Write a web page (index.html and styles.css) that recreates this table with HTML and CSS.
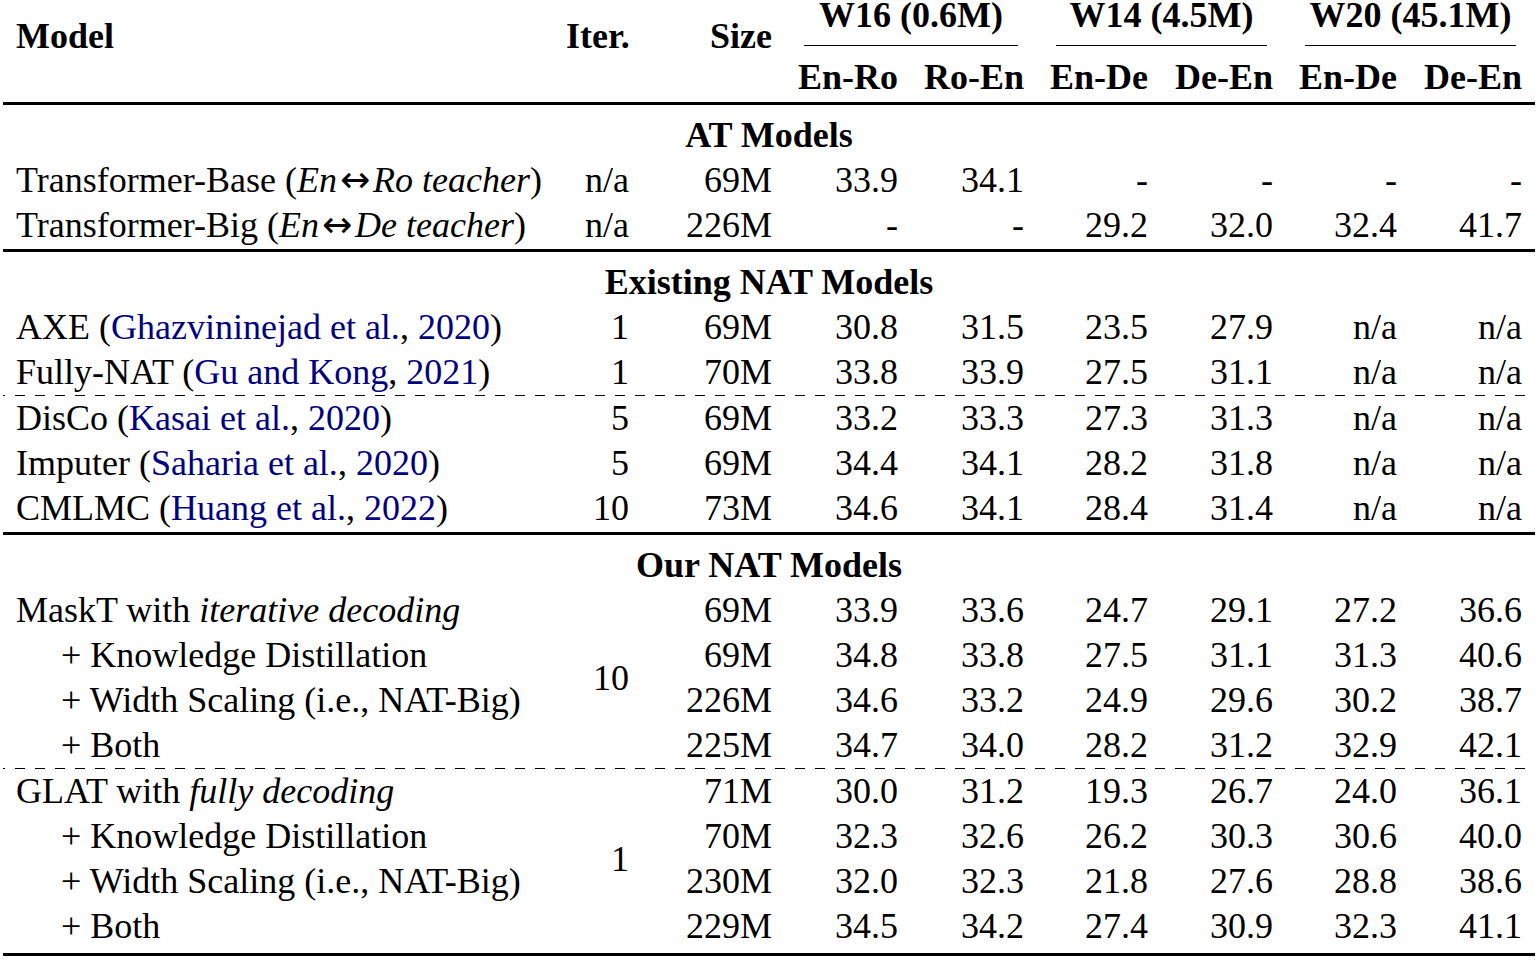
FILE: index.html
```html
<!DOCTYPE html>
<html lang="en">
<head>
<meta charset="utf-8">
<title>NAT results</title>
<link rel="stylesheet" href="styles.css">
</head>
<body>
<table class="results">
  <colgroup>
    <col class="c-model"><col class="c-iter"><col class="c-size">
    <col class="c-a"><col class="c-a"><col class="c-b"><col class="c-c"><col class="c-b"><col class="c-c">
  </colgroup>
  <thead>
    <tr>
      <th rowspan="2" class="rs left">Model</th>
      <th rowspan="2" class="rs">Iter.</th>
      <th rowspan="2" class="rs">Size</th>
      <th colspan="2" class="grp"><div class="cm">W16 (0.6M)</div></th>
      <th colspan="2" class="grp"><div class="cm">W14 (4.5M)</div></th>
      <th colspan="2" class="grp"><div class="cm">W20 (45.1M)</div></th>
    </tr>
    <tr class="pairs">
      <th>En-Ro</th><th>Ro-En</th><th>En-De</th><th>De-En</th><th>En-De</th><th>De-En</th>
    </tr>
  </thead>
  <tbody>
    <tr><td colspan="9" class="section">AT Models</td></tr>
    <tr>
      <td class="left">Transformer-Base (<i>En</i><span class="arr">↔</span><i>Ro teacher</i>)</td>
      <td>n/a</td><td>69M</td><td>33.9</td><td>34.1</td><td>-</td><td>-</td><td>-</td><td>-</td>
    </tr>
    <tr class="end">
      <td class="left">Transformer-Big (<i>En</i><span class="arr">↔</span><i>De teacher</i>)</td>
      <td>n/a</td><td>226M</td><td>-</td><td>-</td><td>29.2</td><td>32.0</td><td>32.4</td><td>41.7</td>
    </tr>

    <tr><td colspan="9" class="section">Existing NAT Models</td></tr>
    <tr>
      <td class="left">AXE (<span class="cite">Ghazvininejad et al.</span>, <span class="cite">2020</span>)</td>
      <td>1</td><td>69M</td><td>30.8</td><td>31.5</td><td>23.5</td><td>27.9</td><td>n/a</td><td>n/a</td>
    </tr>
    <tr>
      <td class="left">Fully-NAT (<span class="cite">Gu and Kong</span>, <span class="cite">2021</span>)</td>
      <td>1</td><td>70M</td><td>33.8</td><td>33.9</td><td>27.5</td><td>31.1</td><td>n/a</td><td>n/a</td>
    </tr>
    <tr class="dash"><td colspan="9"></td></tr>
    <tr>
      <td class="left">DisCo (<span class="cite">Kasai et al.</span>, <span class="cite">2020</span>)</td>
      <td>5</td><td>69M</td><td>33.2</td><td>33.3</td><td>27.3</td><td>31.3</td><td>n/a</td><td>n/a</td>
    </tr>
    <tr>
      <td class="left">Imputer (<span class="cite">Saharia et al.</span>, <span class="cite">2020</span>)</td>
      <td>5</td><td>69M</td><td>34.4</td><td>34.1</td><td>28.2</td><td>31.8</td><td>n/a</td><td>n/a</td>
    </tr>
    <tr class="end">
      <td class="left">CMLMC (<span class="cite">Huang et al.</span>, <span class="cite">2022</span>)</td>
      <td>10</td><td>73M</td><td>34.6</td><td>34.1</td><td>28.4</td><td>31.4</td><td>n/a</td><td>n/a</td>
    </tr>

    <tr><td colspan="9" class="section">Our NAT Models</td></tr>
    <tr>
      <td class="left">MaskT with <i>iterative decoding</i></td>
      <td rowspan="4" class="multi">10</td><td>69M</td><td>33.9</td><td>33.6</td><td>24.7</td><td>29.1</td><td>27.2</td><td>36.6</td>
    </tr>
    <tr>
      <td class="left sub">+ Knowledge Distillation</td>
      <td>69M</td><td>34.8</td><td>33.8</td><td>27.5</td><td>31.1</td><td>31.3</td><td>40.6</td>
    </tr>
    <tr>
      <td class="left sub">+ Width Scaling (i.e., NAT-Big)</td>
      <td>226M</td><td>34.6</td><td>33.2</td><td>24.9</td><td>29.6</td><td>30.2</td><td>38.7</td>
    </tr>
    <tr>
      <td class="left sub">+ Both</td>
      <td>225M</td><td>34.7</td><td>34.0</td><td>28.2</td><td>31.2</td><td>32.9</td><td>42.1</td>
    </tr>
    <tr class="dash"><td colspan="9"></td></tr>
    <tr>
      <td class="left">GLAT with <i>fully decoding</i></td>
      <td rowspan="4" class="multi last">1</td><td>71M</td><td>30.0</td><td>31.2</td><td>19.3</td><td>26.7</td><td>24.0</td><td>36.1</td>
    </tr>
    <tr>
      <td class="left sub">+ Knowledge Distillation</td>
      <td>70M</td><td>32.3</td><td>32.6</td><td>26.2</td><td>30.3</td><td>30.6</td><td>40.0</td>
    </tr>
    <tr>
      <td class="left sub">+ Width Scaling (i.e., NAT-Big)</td>
      <td>230M</td><td>32.0</td><td>32.3</td><td>21.8</td><td>27.6</td><td>28.8</td><td>38.6</td>
    </tr>
    <tr class="end final">
      <td class="left sub">+ Both</td>
      <td>229M</td><td>34.5</td><td>34.2</td><td>27.4</td><td>30.9</td><td>32.3</td><td>41.1</td>
    </tr>
  </tbody>
</table>
</body>
</html>
```

FILE: styles.css
```css
html, body {
  margin: 0;
  padding: 0;
  background: #ffffff;
}

body {
  color: #000000;
  font-family: "Liberation Serif", "Times New Roman", serif;
  font-size: 36px;
}

.results {
  margin-left: 3px;
  width: 1532px;
  table-layout: fixed;
  border-collapse: separate;
  border-spacing: 0;
}

.c-model { width: 550px; }
.c-iter { width: 89px; }
.c-size { width: 143px; }
.c-a { width: 126px; }
.c-b { width: 124px; }
.c-c { width: 125px; }

.results th,
.results td {
  padding: 0 13px;
  line-height: 45px;
  white-space: nowrap;
  text-align: right;
  font-weight: normal;
}

.results th {
  font-weight: bold;
}

.results .left {
  text-align: left;
}

.results td.sub {
  padding-left: 58px;
}

.arr {
  font-family: "DejaVu Sans", sans-serif;
  font-style: normal;
  font-weight: normal;
  line-height: 0;
  margin: 0 3px;
}

/* header */
.results th.rs {
  vertical-align: top;
  padding-top: 14px;
  border-bottom: 3px solid #000;
}

.results th.grp {
  padding: 0;
  vertical-align: top;
}

.cm {
  margin: 0 19px;
  padding-bottom: 15px;
  line-height: 30px;
  text-align: center;
  border-bottom: 1px solid #000;
}

.pairs th {
  padding-top: 9px;
  padding-bottom: 2px;
  border-bottom: 3px solid #000;
}

/* body */
.results td.section {
  padding-top: 8px;
  text-align: center;
  font-weight: bold;
}

.results tr.end td {
  padding-bottom: 1px;
  border-bottom: 3px solid #000;
}

.results tr.final td {
  padding-bottom: 4px;
}

.results td.multi {
  vertical-align: middle;
}

.results td.multi.last {
  padding-bottom: 4px;
  border-bottom: 3px solid #000;
}

.results tr.dash td {
  padding: 0;
  height: 1px;
  line-height: 0;
  font-size: 0;
  background-image: repeating-linear-gradient(90deg, #000 0 2px, transparent 2px 12px, #000 12px 20px);
}

.cite {
  color: #000080;
}

i {
  font-style: italic;
}
```
